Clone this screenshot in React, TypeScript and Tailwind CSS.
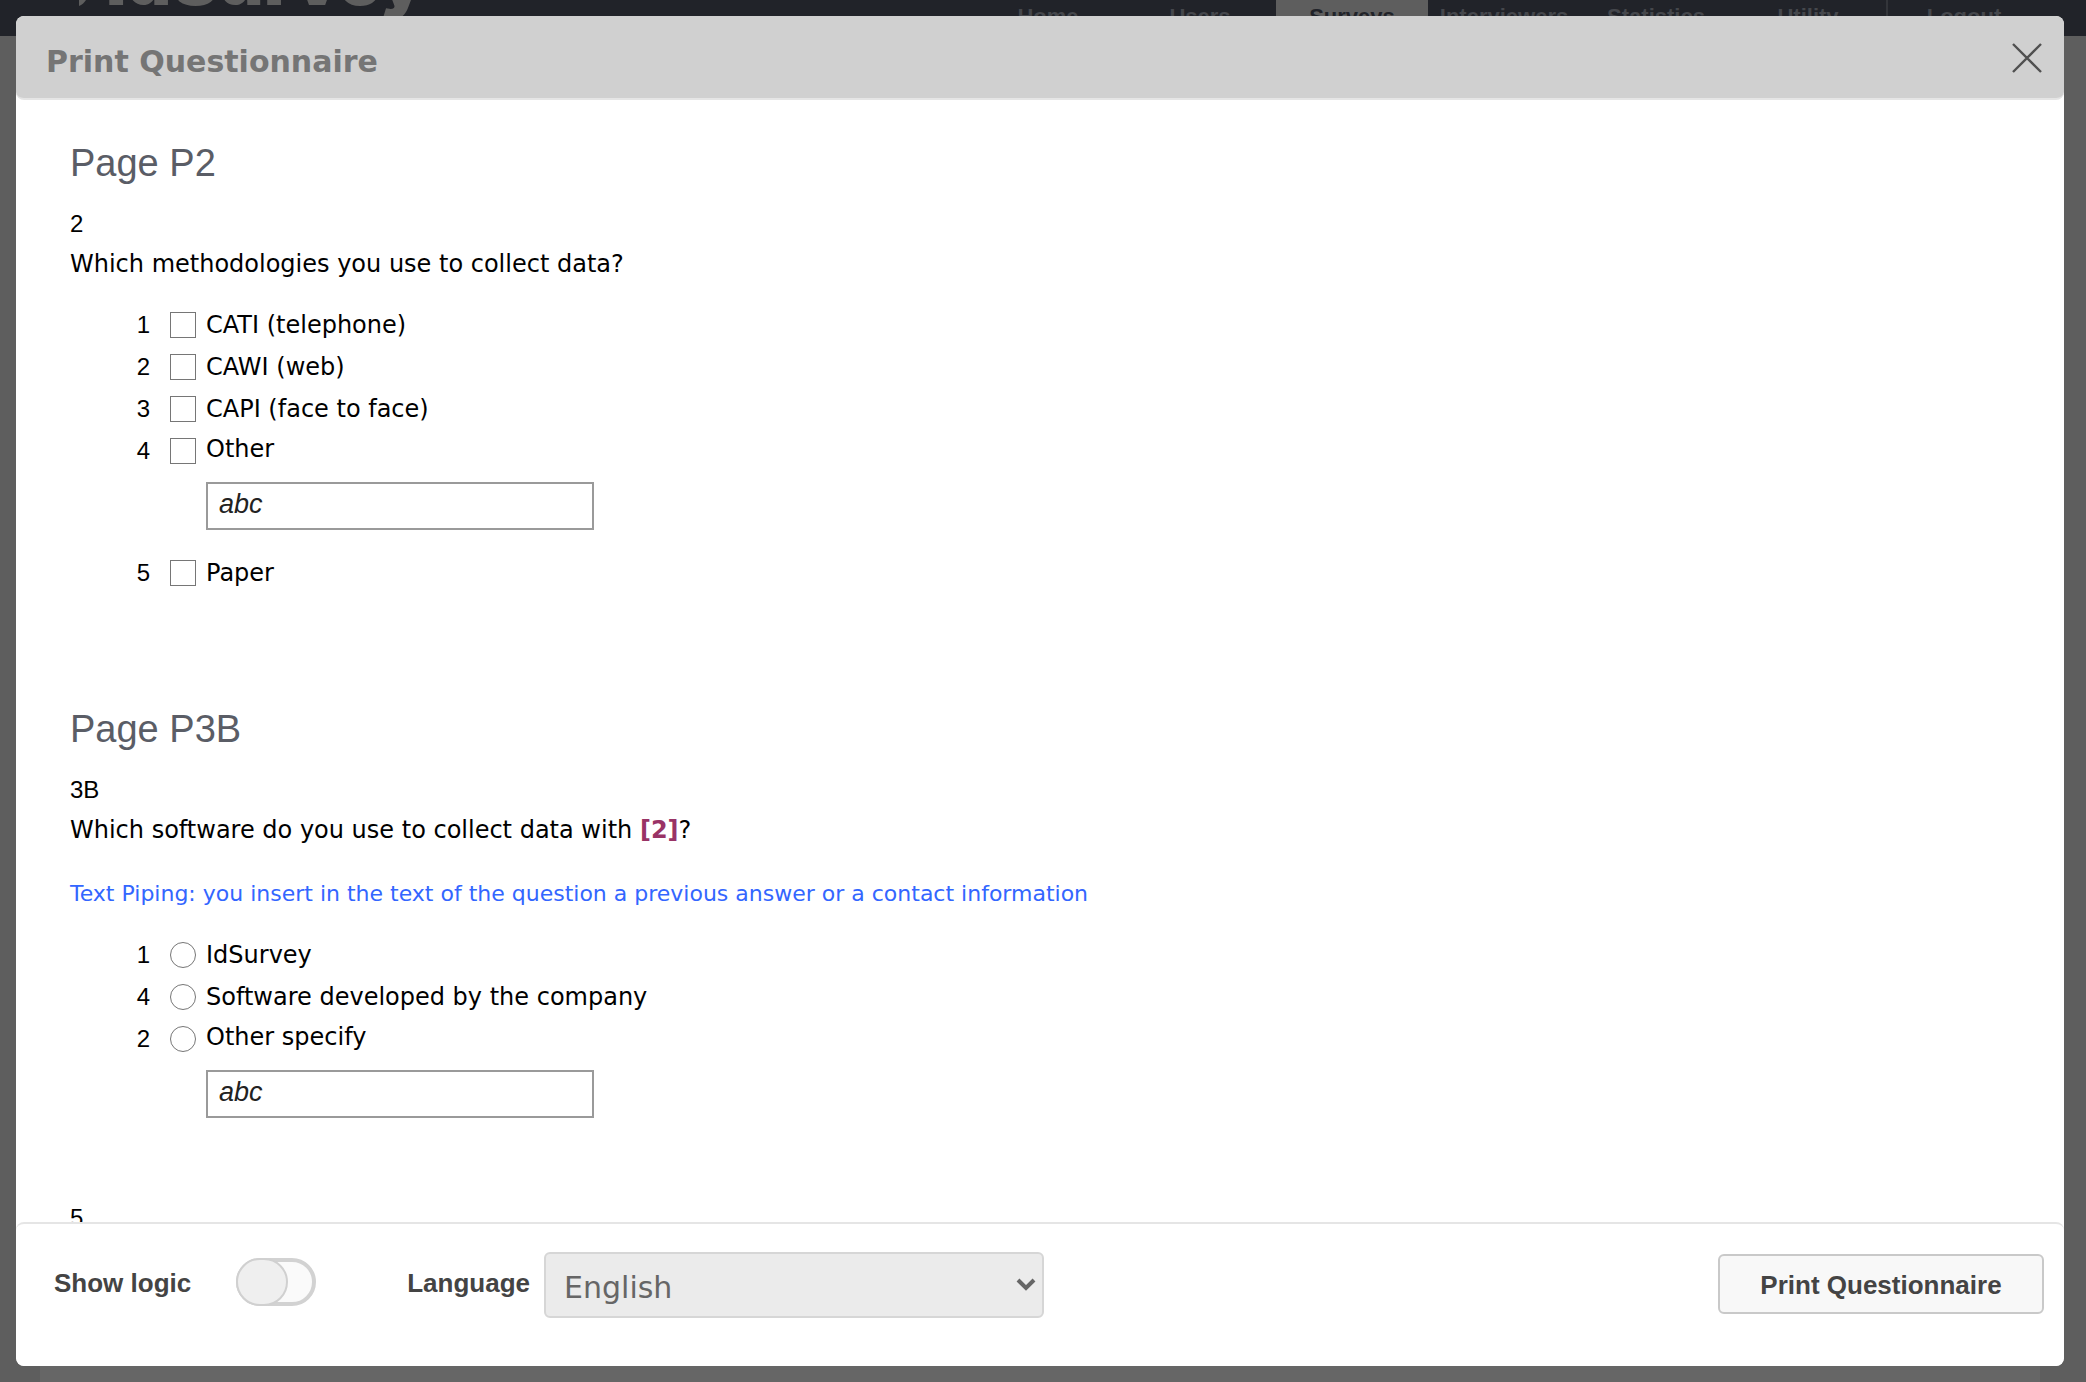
import { type ReactNode } from "react";

const NAV = ["Home", "Users", "Surveys", "Interviewers", "Statistics", "Utility"];

type Choice = { code: string; label: string; other?: boolean };

const METHODS: Choice[] = [
  { code: "1", label: "CATI (telephone)" },
  { code: "2", label: "CAWI (web)" },
  { code: "3", label: "CAPI (face to face)" },
  { code: "4", label: "Other", other: true },
  { code: "5", label: "Paper" },
];

const SOFTWARE: Choice[] = [
  { code: "1", label: "IdSurvey" },
  { code: "4", label: "Software developed by the company" },
  { code: "2", label: "Other specify", other: true },
];

function TopBar() {
  return (
    <header className="flex h-9 justify-between overflow-hidden bg-[#212329]">
      <div className="ml-[76px] flex text-[#5e5e5e]">
        <svg viewBox="0 0 30 8" className="h-2 w-[30px]" fill="currentColor">
          <path d="M3 0h7C8 3 6 5 3 6Z" />
        </svg>
        <div className="-mt-14 font-['Inter'] text-[70px] leading-[72px] font-black">IdSurvey</div>
      </div>
      <nav className="mr-[46px] flex text-[22px] leading-[34px] font-bold text-[#45474c]">
        {NAV.map((item) => (
          <a
            key={item}
            href="#"
            className={`w-[152px] text-center ${item === "Surveys" ? "bg-[#5e5e5e] text-[#212329]" : ""}`}
          >
            {item}
          </a>
        ))}
        <a href="#" className="ml-[2px] w-[154px] border-l-2 border-[#33353a] text-center">
          Logout
        </a>
      </nav>
    </header>
  );
}

/** Numbered answers of one question, with a free text box under an "other" answer. */
function Choices({ name, type, items }: { name: string; type: "checkbox" | "radio"; items: Choice[] }) {
  return (
    <ul className="pl-[60px]">
      {items.map((c) => (
        <li key={c.code}>
          <label className="flex h-[42px] items-center">
            <span className="w-5 text-right">{c.code}</span>
            <input
              type={type}
              name={name}
              className={`ml-5 size-[26px] shrink-0 appearance-none border border-[#767676] bg-white ${
                type === "radio" ? "rounded-full" : ""
              }`}
            />
            <span className={`ml-[10px] font-['DejaVu_Sans'] ${c.other ? "pb-1" : ""}`}>{c.label}</span>
          </label>
          {c.other && (
            <input
              type="text"
              aria-label={c.label}
              placeholder="abc"
              className="mt-[10px] mb-[22px] ml-[76px] block h-12 w-[388px] border-2 border-[#9a9a9a] px-[11px] pb-1 text-[27px] italic placeholder:text-[#222]"
            />
          )}
        </li>
      ))}
    </ul>
  );
}

function Question({ page, code, text, children }: { page: string; code: string; text: ReactNode; children: ReactNode }) {
  return (
    <section>
      <h2 className="text-[38px] leading-[44px] text-[#5a5d66]">{page}</h2>
      <p className="mt-[19px] leading-10">{code}</p>
      <p className="font-['DejaVu_Sans'] leading-10">{text}</p>
      {children}
    </section>
  );
}

export default function App() {
  return (
    <div className="relative h-screen overflow-hidden bg-[#5e5e5e] font-['Liberation_Sans',sans-serif]">
      <TopBar />
      <div className="mr-[46px] ml-10 h-full bg-[#666]" />

      <div
        role="dialog"
        aria-label="Print Questionnaire"
        className="absolute top-4 right-[22px] bottom-4 left-4 flex flex-col overflow-hidden rounded-lg bg-white"
      >
        <div className="flex h-[84px] shrink-0 items-center justify-between rounded-lg border-b-2 border-[#e5e5e5] bg-[#d0d0d0] pt-[2px] pr-[22px] pl-[30px]">
          <h1 className="pt-2 font-['DejaVu_Sans'] text-[30px] leading-9 font-bold text-[#757575]">
            Print Questionnaire
          </h1>
          <button type="button" aria-label="Close">
            <svg viewBox="0 0 30 30" className="size-[30px]" stroke="#505050" strokeWidth="2.4">
              <path d="M1 1 29 29M29 1 1 29" />
            </svg>
          </button>
        </div>

        <main className="min-h-0 flex-1 overflow-hidden px-[54px] pt-[41px] text-2xl text-black">
          <Question page="Page P2" code="2" text="Which methodologies you use to collect data?">
            <div className="mt-5">
              <Choices name="q2" type="checkbox" items={METHODS} />
            </div>
          </Question>

          <div className="mt-[113px]">
            <Question
              page="Page P3B"
              code="3B"
              text={
                <>
                  Which software do you use to collect data with <b className="text-[#993366]">[2]</b>?
                </>
              }
            >
              <p className="mt-6 font-['DejaVu_Sans'] text-[22px] leading-10 text-[#3366ff]">
                Text Piping: you insert in the text of the question a previous answer or a contact information
              </p>
              <div className="mt-5">
                <Choices name="q3b" type="radio" items={SOFTWARE} />
              </div>
            </Question>
          </div>

          <p className="mt-20 leading-10">5</p>
        </main>

        <footer className="flex h-[144px] shrink-0 items-start rounded-lg border-t-2 border-[#e5e5e5] bg-white pt-7 pr-5 pl-[38px] text-[26px] font-bold text-[#444]">
          <label htmlFor="logic" className="mt-[13px] leading-9">
            Show logic
          </label>
          <input
            id="logic"
            type="checkbox"
            role="switch"
            className="mt-[6px] ml-[45px] h-12 w-20 appearance-none rounded-full border-4 border-[#d2d2d2] bg-[#fafafa] before:-mt-1 before:-ml-1 before:block before:h-12 before:w-[52px] before:rounded-full before:border-2 before:border-[#d0d0d0] before:bg-[#efefef]"
          />
          <label htmlFor="lang" className="mt-[13px] ml-[91px] leading-9">
            Language
          </label>
          <div className="relative ml-[14px]">
            <select
              id="lang"
              className="h-[66px] w-[500px] appearance-none rounded-md border-2 border-[#d6d6d6] bg-[#ebebeb] px-[18px] pt-1 font-['DejaVu_Sans'] text-[30px] font-normal text-[#666]"
            >
              <option>English</option>
            </select>
            <svg
              viewBox="0 0 20 14"
              className="pointer-events-none absolute top-[26px] right-2 h-[14px] w-5"
              fill="none"
              stroke="#666"
              strokeWidth="4"
            >
              <path d="M2 2l8 8 8-8" />
            </svg>
          </div>
          <button
            type="button"
            className="mt-[2px] ml-auto h-[60px] w-[326px] rounded-md border-2 border-[#c9c9c9] bg-[#f8f8f8] pt-[2px]"
          >
            Print Questionnaire
          </button>
        </footer>
      </div>
    </div>
  );
}
